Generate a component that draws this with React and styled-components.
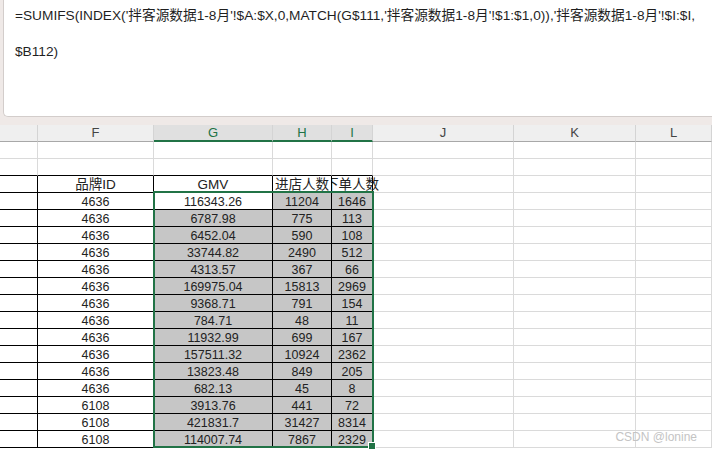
import React from 'react';
import styled, { createGlobalStyle } from 'styled-components';

const GlobalStyle = createGlobalStyle`
  html, body {
    margin: 0;
    padding: 0;
    background: #fff;
  }
`;

const COLS = '38px 116px 119px 59px 41px 141px 122px 76px';
const LETTERS = ['', 'F', 'G', 'H', 'I', 'J', 'K', 'L'];
const SELECTED = ['G', 'H', 'I'];

const rows = [
  ['4636', '116343.26', '11204', '1646'],
  ['4636', '6787.98', '775', '113'],
  ['4636', '6452.04', '590', '108'],
  ['4636', '33744.82', '2490', '512'],
  ['4636', '4313.57', '367', '66'],
  ['4636', '169975.04', '15813', '2969'],
  ['4636', '9368.71', '791', '154'],
  ['4636', '784.71', '48', '11'],
  ['4636', '11932.99', '699', '167'],
  ['4636', '157511.32', '10924', '2362'],
  ['4636', '13823.48', '849', '205'],
  ['4636', '682.13', '45', '8'],
  ['6108', '3913.76', '441', '72'],
  ['6108', '421831.7', '31427', '8314'],
  ['6108', '114007.74', '7867', '2329'],
];

const Page = styled.div`
  position: relative;
  width: 712px;
  height: 450px;
  overflow: hidden;
  background: #fff;
  font-family: "Liberation Sans", "Noto Sans CJK SC", sans-serif;
`;

const FormulaArea = styled.div`
  background: #efe9e7;
  padding: 0 0 8px 3px;
`;

const FormulaBox = styled.div`
  height: 117px;
  box-sizing: border-box;
  background: #fff;
  border-left: 1px solid #d3cdcb;
  border-bottom: 1px solid #d3cdcb;
  border-bottom-left-radius: 5px;
  padding-left: 11px;
  font-size: 13.7px;
  color: #1f1f1f;
  white-space: nowrap;
  overflow: hidden;
`;

const FormulaLine = styled.div`
  line-height: 36px;
  margin-top: ${p => (p.$first ? '-2px' : '0')};
`;

const ColumnHeader = styled.div`
  display: grid;
  grid-template-columns: ${COLS};
  height: 17px;
`;

const ColLetter = styled.div`
  box-sizing: border-box;
  height: 17px;
  background: ${p => (p.$active ? '#e0e0e0' : '#efefef')};
  border-right: 1px solid #d4d4d4;
  border-bottom: ${p => (p.$active ? '2px solid #217346' : '1px solid #a8a8a8')};
  color: ${p => (p.$active ? '#217346' : '#444')};
  font-size: 13px;
  line-height: 16px;
  text-align: center;
`;

const Sheet = styled.div`
  position: relative;
  display: grid;
  grid-template-columns: ${COLS};
  grid-auto-rows: 17px;
`;

const Cell = styled.div`
  box-sizing: border-box;
  display: flex;
  justify-content: center;
  align-items: flex-end;
  border-right: 1px solid ${p => (p.$br ? '#000' : '#dadada')};
  border-bottom: 1px solid ${p => (p.$bb ? '#000' : '#dadada')};
  background: ${p => (p.$fill ? '#c6c6c6' : 'transparent')};
  color: #222;
  font-size: ${p => (p.$cjk ? '13.5px' : '12.5px')};
  line-height: 14px;
  padding-bottom: ${p => (p.$cjk ? '0' : '0')};
  white-space: nowrap;
  clip-path: ${p => (p.$clip ? 'inset(0 -40px -2px 0)' : 'none')};
`;

const Selection = styled.div`
  position: absolute;
  left: 153px;
  top: 49px;
  width: 221px;
  height: 257px;
  box-sizing: border-box;
  border: 2px solid #217346;
  pointer-events: none;
`;

const FillHandle = styled.div`
  position: absolute;
  right: -4px;
  bottom: -4px;
  width: 6px;
  height: 6px;
  background: #217346;
  border: 1px solid #fff;
`;

const Watermark = styled.div`
  position: absolute;
  right: 15px;
  bottom: 6px;
  font-size: 12px;
  color: #c4c4c4;
  text-shadow: 0 0 1px #fff;
`;

const App = () => {
  const blank = (r, bb, br) =>
    LETTERS.map((_, c) => (
      <Cell key={`${r}-${c}`} $bb={bb && c < 5} $br={br && c < 5} />
    ));

  return <>
    <GlobalStyle />
    <Page>
      <FormulaArea>
        <FormulaBox>
          <FormulaLine $first>
            =SUMIFS(INDEX('拌客源数据1-8月'!$A:$X,0,MATCH(G$111,'拌客源数据1-8月'!$1:$1,0)),'拌客源数据1-8月'!$I:$I,
          </FormulaLine>
          <FormulaLine>$B112)</FormulaLine>
        </FormulaBox>
      </FormulaArea>

      <ColumnHeader>
        {LETTERS.map((l, i) => (
          <ColLetter key={i} $active={SELECTED.includes(l)}>{l}</ColLetter>
        ))}
      </ColumnHeader>

      <Sheet>
        {blank('a', false, false)}
        {blank('b', true, false)}

        <Cell $bb $br />
        <Cell $bb $br $cjk>品牌ID</Cell>
        <Cell $bb $br $cjk>GMV</Cell>
        <Cell $bb $br $cjk>进店人数</Cell>
        <Cell $bb $br $cjk $clip>下单人数</Cell>
        <Cell />
        <Cell />
        <Cell />

        {rows.map((row, r) => (
          <React.Fragment key={r}>
            <Cell $bb $br />
            {row.map((v, c) => (
              <Cell key={c} $bb $br $fill={c > 0 && !(r === 0 && c === 1)}>{v}</Cell>
            ))}
            <Cell />
            <Cell />
            <Cell />
          </React.Fragment>
        ))}

        <Selection>
          <FillHandle />
        </Selection>
      </Sheet>

      <Watermark>CSDN @lonine</Watermark>
    </Page>
  </>;
};

export default App;
